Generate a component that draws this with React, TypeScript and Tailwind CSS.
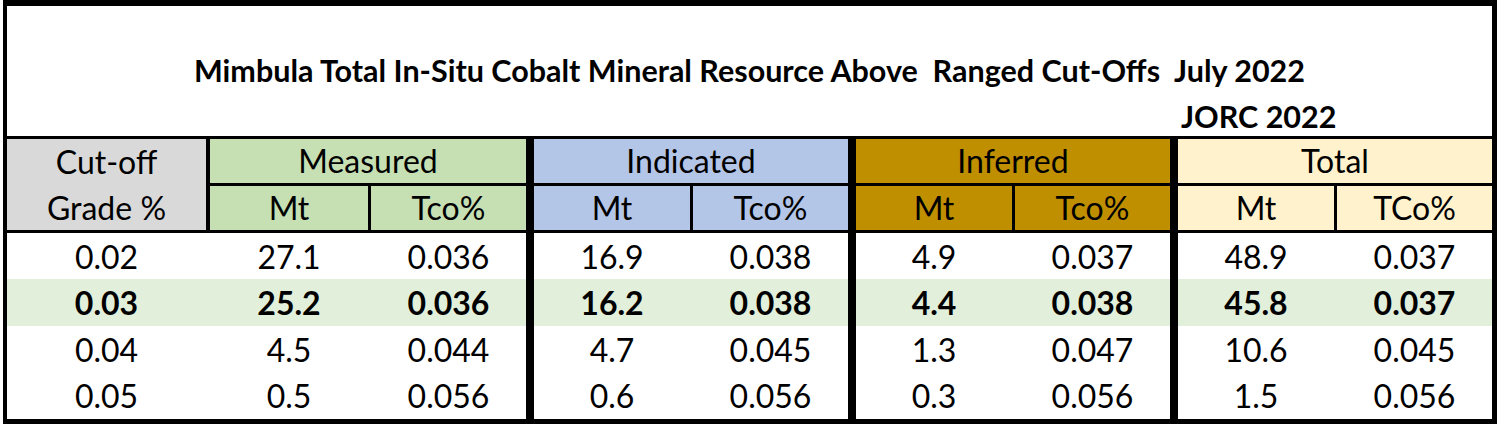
const cols =
  "grid grid-cols-[199px_4px_158px_3px_155px_8px_156px_3px_155px_8px_156px_3px_155px_8px_156px_3px_155px]";

const groups = [
  { name: "Measured", bg: "bg-[#c6e0b4]", label: "col-[3/span_3]", mt: "col-[3]", tco: "col-[5]", tcoName: "Tco%" },
  { name: "Indicated", bg: "bg-[#b4c6e7]", label: "col-[7/span_3]", mt: "col-[7]", tco: "col-[9]", tcoName: "Tco%" },
  { name: "Inferred", bg: "bg-[#bf8f00]", label: "col-[11/span_3]", mt: "col-[11]", tco: "col-[13]", tcoName: "Tco%" },
  { name: "Total", bg: "bg-[#fff2cc]", label: "col-[15/span_3]", mt: "col-[15]", tco: "col-[17]", tcoName: "TCo%" },
];

const rows = [
  { cut: "0.02", vals: ["27.1", "0.036", "16.9", "0.038", "4.9", "0.037", "48.9", "0.037"], h: "h-[46px]", bg: "bg-white", bold: false },
  { cut: "0.03", vals: ["25.2", "0.036", "16.2", "0.038", "4.4", "0.038", "45.8", "0.037"], h: "h-[47px]", bg: "bg-[#e2efda]", bold: true },
  { cut: "0.04", vals: ["4.5", "0.044", "4.7", "0.045", "1.3", "0.047", "10.6", "0.045"], h: "h-[46px]", bg: "bg-white", bold: false },
  { cut: "0.05", vals: ["0.5", "0.056", "0.6", "0.056", "0.3", "0.056", "1.5", "0.056"], h: "h-[47px]", bg: "bg-white", bold: false },
];

function Cell({ children }: { children: React.ReactNode }) {
  return <div className="flex items-center justify-center">{children}</div>;
}

export default function App() {
  return (
    <div className="w-[1500px] h-[432px] bg-white font-['Lato','Open_Sans',sans-serif] text-black">
      <div className="ml-[3px] w-[1494px] border-l-4 border-r-[5px] border-t-[6px] border-b-[5px] border-black">
        {/* title block */}
        <div className="h-[133px] pt-[41px] border-b-[3px] border-black font-bold text-[30.5px] leading-[46px]">
          <div className="text-center whitespace-pre">
            Mimbula Total In-Situ Cobalt Mineral Resource Above  Ranged Cut-Offs  July 2022
          </div>
          <div className="pl-[1174px]">JORC 2022</div>
        </div>

        {/* header */}
        <div className={`${cols} grid-rows-[44px_3px_44px] bg-black border-b-[3px] border-black text-[32px] leading-[46px]`}>
          <div className="col-[1] row-[1/span_3] bg-[#d9d9d9] flex flex-col items-center justify-center">
            <span>Cut-off</span>
            <span>Grade %</span>
          </div>
          {groups.map((g) => (
            <div key={g.name} className="contents">
              <div className={`${g.label} row-[1] ${g.bg} flex items-center justify-center`}>{g.name}</div>
              <div className={`${g.mt} row-[3] ${g.bg} flex items-center justify-center`}>Mt</div>
              <div className={`${g.tco} row-[3] ${g.bg} flex items-center justify-center`}>{g.tcoName}</div>
            </div>
          ))}
        </div>

        {/* data rows */}
        {rows.map((r) => (
          <div key={r.cut} className={`${cols} ${r.h} ${r.bg} text-[32px] ${r.bold ? "font-bold" : ""}`}>
            <Cell>{r.cut}</Cell>
            <div />
            <Cell>{r.vals[0]}</Cell>
            <div />
            <Cell>{r.vals[1]}</Cell>
            <div className="bg-black" />
            <Cell>{r.vals[2]}</Cell>
            <div />
            <Cell>{r.vals[3]}</Cell>
            <div className="bg-black" />
            <Cell>{r.vals[4]}</Cell>
            <div />
            <Cell>{r.vals[5]}</Cell>
            <div className="bg-black" />
            <Cell>{r.vals[6]}</Cell>
            <div />
            <Cell>{r.vals[7]}</Cell>
          </div>
        ))}
      </div>
    </div>
  );
}
